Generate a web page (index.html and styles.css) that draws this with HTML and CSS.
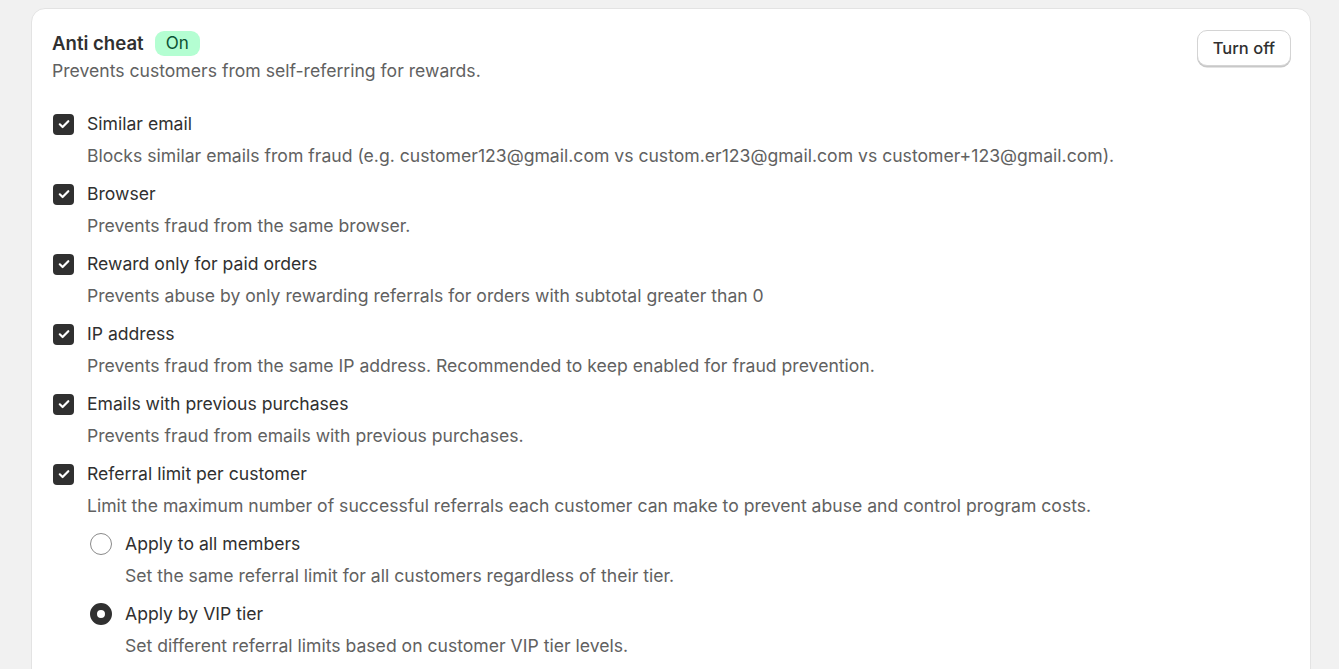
FILE: index.html
```html
<!DOCTYPE html>
<html>
<head>
<meta charset="utf-8">
<link rel="stylesheet" href="styles.css">
</head>
<body>
<div class="card">
  <div class="header">
    <div class="head-text">
      <div class="title-row">
        <span class="title">Anti cheat</span>
        <span class="badge">On</span>
      </div>
      <div class="sub">Prevents customers from self-referring for rewards.</div>
    </div>
    <button class="btn">Turn off</button>
  </div>
  <div class="list">
    <div class="item">
      <div class="row"><span class="check"><svg viewBox="0 0 20 20" width="20" height="20"><path d="M5.8 10.3l2.8 2.7L14.3 7.2" fill="none" stroke="#fff" stroke-width="2.2" stroke-linecap="round" stroke-linejoin="round"/></svg></span><span class="label">Similar email</span></div>
      <div class="desc">Blocks similar emails from fraud (e.g. customer123@gmail.com vs custom.er123@gmail.com vs customer+123@gmail.com).</div>
    </div>
    <div class="item">
      <div class="row"><span class="check"><svg viewBox="0 0 20 20" width="20" height="20"><path d="M5.8 10.3l2.8 2.7L14.3 7.2" fill="none" stroke="#fff" stroke-width="2.2" stroke-linecap="round" stroke-linejoin="round"/></svg></span><span class="label">Browser</span></div>
      <div class="desc">Prevents fraud from the same browser.</div>
    </div>
    <div class="item">
      <div class="row"><span class="check"><svg viewBox="0 0 20 20" width="20" height="20"><path d="M5.8 10.3l2.8 2.7L14.3 7.2" fill="none" stroke="#fff" stroke-width="2.2" stroke-linecap="round" stroke-linejoin="round"/></svg></span><span class="label">Reward only for paid orders</span></div>
      <div class="desc">Prevents abuse by only rewarding referrals for orders with subtotal greater than 0</div>
    </div>
    <div class="item">
      <div class="row"><span class="check"><svg viewBox="0 0 20 20" width="20" height="20"><path d="M5.8 10.3l2.8 2.7L14.3 7.2" fill="none" stroke="#fff" stroke-width="2.2" stroke-linecap="round" stroke-linejoin="round"/></svg></span><span class="label">IP address</span></div>
      <div class="desc">Prevents fraud from the same IP address. Recommended to keep enabled for fraud prevention.</div>
    </div>
    <div class="item">
      <div class="row"><span class="check"><svg viewBox="0 0 20 20" width="20" height="20"><path d="M5.8 10.3l2.8 2.7L14.3 7.2" fill="none" stroke="#fff" stroke-width="2.2" stroke-linecap="round" stroke-linejoin="round"/></svg></span><span class="label">Emails with previous purchases</span></div>
      <div class="desc">Prevents fraud from emails with previous purchases.</div>
    </div>
    <div class="item">
      <div class="row"><span class="check"><svg viewBox="0 0 20 20" width="20" height="20"><path d="M5.8 10.3l2.8 2.7L14.3 7.2" fill="none" stroke="#fff" stroke-width="2.2" stroke-linecap="round" stroke-linejoin="round"/></svg></span><span class="label">Referral limit per customer</span></div>
      <div class="desc">Limit the maximum number of successful referrals each customer can make to prevent abuse and control program costs.</div>
    </div>
    <div class="sublist">
      <div class="item">
        <div class="row"><span class="radio"></span><span class="label">Apply to all members</span></div>
        <div class="desc">Set the same referral limit for all customers regardless of their tier.</div>
      </div>
      <div class="item">
        <div class="row"><span class="radio on"></span><span class="label">Apply by VIP tier</span></div>
        <div class="desc">Set different referral limits based on customer VIP tier levels.</div>
      </div>
    </div>
  </div>
</div>
</body>
</html>
```

FILE: styles.css
```css
* { box-sizing: border-box; }
html, body { margin: 0; padding: 0; }
body {
  background: #f1f1f1;
  font-family: Inter, "Noto Sans", sans-serif;
  color: #303030;
  height: 669px;
  overflow: hidden;
  padding: 8px 28px 0 31px;
}
.card {
  background: #fff;
  border: 1px solid #e3e3e3;
  border-radius: 14px;
  padding: 20px 19px 40px 20px;
  min-height: 700px;
}
.header {
  display: flex;
  justify-content: space-between;
  align-items: flex-start;
}
.title-row {
  display: flex;
  align-items: center;
  gap: 11px;
  height: 28px;
}
.title {
  font-size: 18.6px;
  font-weight: 600;
  color: #303030;
  line-height: 28px;
}
.badge {
  background: #b4fed2;
  color: #0c5132;
  font-size: 17px;
  border-radius: 9px;
  padding: 2px 11px;
  line-height: 21px;
}
.sub {
  font-size: 17.6px;
  color: #616161;
  line-height: 27px;
}
.btn {
  margin-top: 1px;
  font-family: Inter, "Noto Sans", sans-serif;
  font-size: 16.5px;
  font-weight: 500;
  color: #303030;
  background: #fff;
  border: 1px solid #d4d4d4;
  border-radius: 10px;
  box-shadow: 0 1.5px 0 #c8c8c8;
  height: 36px;
  padding: 0 15px;
}
.list {
  margin-top: 26px;
  display: flex;
  flex-direction: column;
}
.item {
  height: 70px;
}
.row {
  display: flex;
  align-items: center;
  height: 28px;
  line-height: 28px;
}
.check {
  width: 21px;
  height: 21px;
  border-radius: 4px;
  background: #303030;
  display: flex;
  align-items: center;
  justify-content: center;
  margin-left: 1px;
  margin-right: 13px;
}
.check svg { width: 20px; height: 20px; }
.label {
  font-size: 17.6px;
  color: #303030;
}
.desc {
  margin-top: 4px;
  padding-left: 35px;
  font-size: 17.6px;
  color: #616161;
  line-height: 27px;
}
.sublist {
  padding-left: 38px;
}
.radio {
  width: 22px;
  height: 22px;
  border-radius: 50%;
  border: 1px solid #8a8a8a;
  margin-right: 13px;
}
.radio.on {
  border: 7px solid #303030;
}
```
